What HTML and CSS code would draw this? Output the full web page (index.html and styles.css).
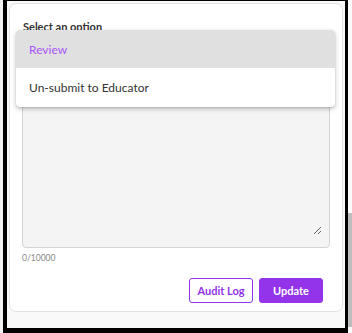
FILE: index.html
```html
<!DOCTYPE html>
<html>
<head>
<meta charset="utf-8">
<link rel="stylesheet" href="styles.css">
</head>
<body>
<div class="page">
  <div class="edge"></div>
  <div class="frame">
    <div class="card">
      <div class="label">Select an option</div>
      <div class="notes-box">
        <textarea class="notes"></textarea>
      </div>
      <div class="counter">0/10000</div>
      <div class="actions">
        <button class="btn btn-outline">Audit Log</button>
        <button class="btn btn-solid">Update</button>
      </div>
      <ul class="menu">
        <li class="menu-item active">Review</li>
        <li class="menu-item">Un-submit to Educator</li>
      </ul>
    </div>
  </div>
  <div class="side">
    <div class="scroll"></div>
  </div>
</div>
</body>
</html>
```
FILE: styles.css
```css
* { box-sizing: border-box; }
html, body { margin: 0; padding: 0; }
body {
  width: 352px;
  height: 333px;
  overflow: hidden;
  background: #f2f2f2;
  font-family: "Lato", "Liberation Sans", sans-serif;
}
.page {
  display: flex;
  height: 333px;
}
.edge {
  width: 3px;
  flex: none;
}
.frame {
  width: 345px;
  height: 333px;
  flex: none;
  border-style: solid;
  border-color: #000;
  border-width: 1px 3px 5px 4px;
  background: #f9f9f9;
  padding: 2px 2px 0 2px;
}
.side {
  flex: 1;
  background: #fafafa;
  padding-top: 213px;
}
.scroll {
  height: 114px;
  background: #bdbdbd;
}
.card {
  position: relative;
  height: 309px;
  background: #fff;
  border: 1px solid #e2e2e2;
  border-radius: 7px;
  padding: 16px 12px 0 12px;
  display: flex;
  flex-direction: column;
}
.label {
  font-size: 11px;
  font-weight: 700;
  color: #333;
  line-height: 13px;
  padding-left: 1px;
}
.notes-box {
  margin-top: 3px;
  height: 212px;
  background: #f4f4f4;
  border: 1px solid #d4d4d4;
  border-radius: 4px;
  padding: 6px 7px 12px 6px;
  display: flex;
}
.notes {
  display: block;
  flex: 1;
  margin: 0;
  background: transparent;
  border: none;
  outline: none;
  resize: vertical;
  font-family: inherit;
  padding: 0;
}
.counter {
  margin-top: 4px;
  font-size: 8.5px;
  color: #888;
  line-height: 12px;
}
.actions {
  display: flex;
  justify-content: flex-end;
  gap: 6px;
  margin-top: 14px;
  padding-right: 7px;
}
.btn {
  height: 25px;
  width: 64px;
  border-radius: 3px;
  font-family: inherit;
  font-size: 11px;
  font-weight: 700;
  padding: 0;
  cursor: pointer;
}
.btn-outline {
  background: #fff;
  color: #9333ea;
  border: 1px solid #9333ea;
}
.btn-solid {
  background: #9333ea;
  color: #fff;
  border: 1px solid #9333ea;
}
.menu {
  position: absolute;
  left: 6px;
  top: 26px;
  width: 319px;
  margin: 0;
  padding: 0;
  list-style: none;
  background: #fff;
  border-radius: 4px;
  box-shadow: 0 2px 5px rgba(0,0,0,0.22), 0 1px 2px rgba(0,0,0,0.12);
  overflow: hidden;
}
.menu-item {
  height: 38px;
  display: flex;
  align-items: center;
  padding-left: 13px;
  font-size: 12px;
  color: #333;
}
.menu-item.active {
  background: #e0e0e0;
  color: #a855f7;
}
.menu-item + .menu-item {
  height: 39px;
}
```
